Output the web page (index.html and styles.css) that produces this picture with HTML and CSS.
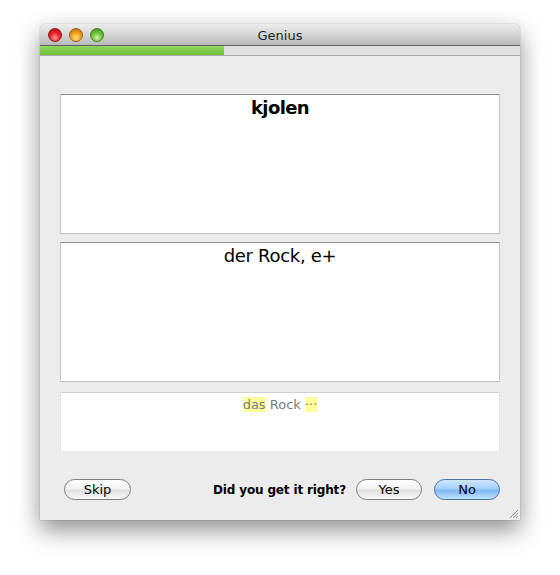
FILE: index.html
```html
<!DOCTYPE html>
<html>
<head>
<meta charset="utf-8">
<title>Genius</title>
<link rel="stylesheet" href="styles.css">
</head>
<body>
<div class="window">
  <div class="titlebar">
    <div class="lights">
      <span class="light red"></span>
      <span class="light orange"></span>
      <span class="light green"></span>
    </div>
    <div class="title">Genius</div>
  </div>
  <div class="progress"><div class="fill" style="width:184px"></div></div>
  <div class="content">
    <div class="box big"><div class="word bold">kjolen</div></div>
    <div class="box big"><div class="word plain">der Rock, e+</div></div>
    <div class="box small"><div class="hint"><span class="hl">das</span> Rock <span class="hl">···</span></div></div>
    <div class="actions">
      <button class="btn skip">Skip</button>
      <div class="spacer"></div>
      <span class="question">Did you get it right?</span>
      <button class="btn">Yes</button>
      <button class="btn default">No</button>
    </div>
  </div>
  <svg class="grip" width="12" height="12" viewBox="0 0 12 12">
    <path d="M11 3 L3 11 M11 6 L6 11 M11 9 L9 11" stroke="#8a8a8a" stroke-width="1"/>
    <path d="M12 4 L4 12 M12 7 L7 12 M12 10 L10 12" stroke="#ffffff" stroke-width="1"/>
  </svg>
</div>
</body>
</html>
```

FILE: styles.css
```css
html, body {
  margin: 0;
  padding: 0;
  background: #ffffff;
}
body {
  font-family: "DejaVu Sans", "Liberation Sans", sans-serif;
  width: 560px;
  height: 575px;
  overflow: hidden;
}
.window {
  position: relative;
  margin: 24px 0 0 40px;
  width: 480px;
  height: 496px;
  background: #ececec;
  border-radius: 5px 5px 0 0;
  box-shadow: 0 10px 24px rgba(0, 0, 0, 0.45), 0 0 1px rgba(0, 0, 0, 0.5);
  display: flex;
  flex-direction: column;
}
.titlebar {
  height: 21px;
  border-bottom: 1px solid #5f5f5f;
  border-radius: 5px 5px 0 0;
  background: linear-gradient(#ececec, #d6d6d6 50%, #b8b8b8);
  display: flex;
  align-items: center;
  position: relative;
}
.lights {
  display: flex;
  gap: 7px;
  margin-left: 8px;
  margin-top: 1px;
}
.light {
  width: 14px;
  height: 14px;
  border-radius: 50%;
  box-sizing: border-box;
}
.red {
  background: radial-gradient(circle at 50% 72%, #ff9a9a 0%, #e8252b 45%, #a8070e 100%);
  border: 1px solid #8a1a1a;
}
.orange {
  background: radial-gradient(circle at 50% 72%, #ffe08a 0%, #f6a21a 45%, #b5660a 100%);
  border: 1px solid #94621c;
}
.green {
  background: radial-gradient(circle at 50% 72%, #d2f7a4 0%, #6ec53d 45%, #3a8a1a 100%);
  border: 1px solid #3f7d22;
}
.title {
  position: absolute;
  left: 0;
  right: 0;
  top: 4px;
  text-align: center;
  font-size: 13px;
  color: #1e1e1e;
}
.progress {
  height: 9px;
  background: #e2e2e2;
  border-bottom: 1px solid #a6a6a6;
}
.fill {
  height: 9px;
  background: linear-gradient(#8fd35c, #72c43c);
}
.content {
  flex: 1;
  display: flex;
  flex-direction: column;
  padding: 38px 20px 0 20px;
}
.box {
  background: #ffffff;
  box-sizing: border-box;
  border: 1px solid #c4c4c4;
  border-top-color: #8e8e8e;
  text-align: center;
}
.big {
  height: 140px;
  margin-bottom: 8px;
}
.big + .small {
  margin-top: 2px;
}
.small {
  height: 59px;
  border: 1px solid #e2e2e2;
  border-top-color: #d0d0d0;
  border-bottom: none;
}
.word {
  font-size: 18px;
  line-height: 22px;
  padding-top: 2px;
  color: #000;
}
.bold {
  font-weight: bold;
  letter-spacing: -0.6px;
}
.plain {
  letter-spacing: -0.3px;
}
.hint {
  font-size: 13px;
  line-height: 16px;
  padding-top: 4px;
  color: #7a7a7a;
}
.hl {
  background: #ffff9c;
}
.actions {
  display: flex;
  align-items: center;
  margin-top: 28px;
  padding-left: 4px;
}
.spacer {
  flex: 1;
}
.question {
  font-size: 12px;
  font-weight: bold;
  color: #000;
  letter-spacing: -0.15px;
  margin-right: 10px;
}
.btn {
  width: 66px;
  height: 21px;
  box-sizing: border-box;
  border-radius: 11px;
  border: 1px solid #7d7d7d;
  background: linear-gradient(#ffffff 0%, #f2f2f2 45%, #e0e0e0 55%, #f8f8f8 100%);
  font-family: "DejaVu Sans", "Liberation Sans", sans-serif;
  font-size: 13px;
  color: #000;
  padding: 0;
  line-height: 19px;
}
.skip {
  width: 67px;
}
.btn + .btn {
  margin-left: 12px;
}
.default {
  border-color: #4f6f9f;
  background: linear-gradient(#cfe6fd 0%, #a5d0fa 45%, #7db8f5 55%, #bfe2ff 100%);
}
.grip {
  position: absolute;
  right: 1px;
  bottom: 1px;
}
```
